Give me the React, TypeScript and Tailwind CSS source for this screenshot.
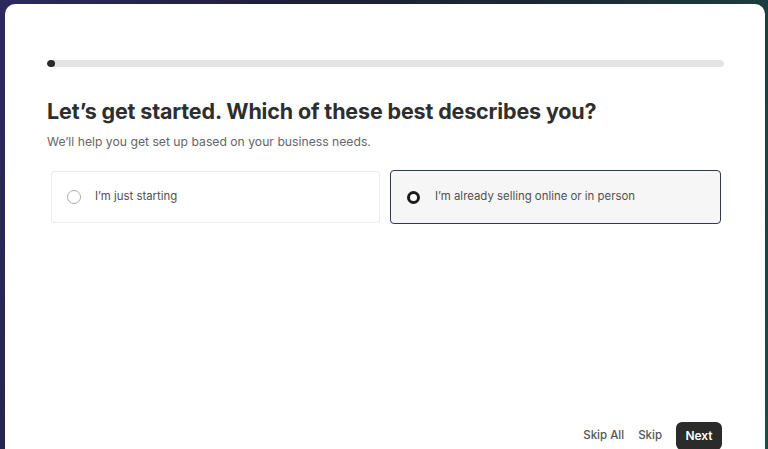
import { useState } from "react";

const options = [
  { id: "starting", label: "I’m just starting" },
  { id: "selling", label: "I’m already selling online or in person" },
];

function Radio({ checked }: { checked: boolean }) {
  return checked ? (
    <span className="block h-[13px] w-[13px] rounded-full border-[3.5px] border-[#1c1c1c] bg-white" />
  ) : (
    <span className="block h-[14px] w-[14px] rounded-full border border-[#adadad] bg-white" />
  );
}

export default function App() {
  const [selected, setSelected] = useState("selling");

  return (
    <div
      className="h-screen w-full overflow-hidden bg-[linear-gradient(105deg,#2d2960_0%,#221f3c_30%,#1c2631_60%,#1b4a45_100%)] pl-[5px] pt-[4px]"
      style={{ fontFamily: "Inter, 'Noto Sans', sans-serif" }}
    >
      <div className="h-[470px] w-[760px] rounded-[10px] bg-white px-[42px] pt-[56px]">
        {/* progress */}
        <div className="h-[7px] w-[677px] overflow-hidden rounded-full bg-[#e4e4e4]">
          <div className="h-full w-[8px] rounded-full bg-[#2a2a2a]" />
        </div>

        <h1 className="mt-[29px] text-[21.5px] font-bold leading-[30px] tracking-[-0.15px] text-[#2e2e2e]">
          Let’s get started. Which of these best describes you?
        </h1>
        <p className="mt-[8px] text-[12.2px] leading-[16px] text-[#666]">
          We’ll help you get set up based on your business needs.
        </p>

        <div className="mt-[20px] flex items-center">
          {options.map((o) => {
            const on = selected === o.id;
            return (
              <button
                key={o.id}
                onClick={() => setSelected(o.id)}
                className={
                  on
                    ? "ml-[10px] flex h-[54px] w-[331px] items-center gap-[15px] rounded-[4px] border border-[#2c3a52] bg-[#f6f6f7] pl-[16px] text-left"
                    : "ml-[4px] flex h-[52px] w-[329px] items-center gap-[14px] rounded-[3px] border border-[#ececec] bg-white pl-[15px] text-left"
                }
              >
                <Radio checked={on} />
                <span className="text-[11.4px] text-[#505050]">{o.label}</span>
              </button>
            );
          })}
        </div>

        <div className="mt-[198px] flex items-center justify-end gap-[14px] pr-[1px]">
          <button className="text-[11.5px] font-medium text-[#555]">Skip All</button>
          <button className="text-[11.5px] font-medium text-[#555]">Skip</button>
          <button className="h-[28px] w-[46px] rounded-[6px] bg-[#2b2b2b] text-[12px] font-semibold text-white">
            Next
          </button>
        </div>
      </div>
    </div>
  );
}
